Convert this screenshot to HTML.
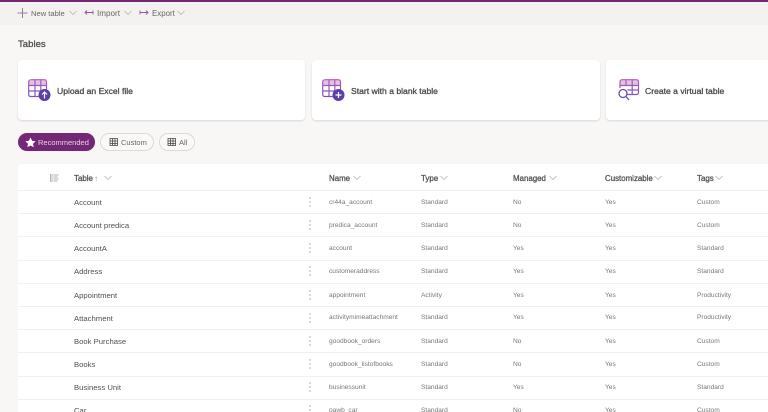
<!DOCTYPE html>
<html><head><meta charset="utf-8"><style>
html,body{margin:0;padding:0}
body{width:768px;height:412px;overflow:hidden;position:relative;background:#f8f7f6;font-family:"Liberation Sans",sans-serif;color:#444}
#w{left:0;top:0;width:768px;height:412px;overflow:hidden;filter:blur(.3px)}
div,span,svg{position:absolute}
.t{white-space:nowrap;line-height:12px;margin-top:1px}
.cmd{font-size:7.9px;color:#666;top:7px}
.card{background:#fff;border-radius:4px;top:60px;height:60px;box-shadow:0 1px 2px rgba(0,0,0,.13)}
.ct{font-size:8.6px;color:#4a4a4a;top:85px;-webkit-text-stroke:.3px #4a4a4a;margin-top:0}
.pill{top:133px;height:18px;border-radius:9px;border:1px solid #dcdad8;box-sizing:border-box;background:#faf9f8}
.h{font-size:7.9px;color:#555;top:172px;-webkit-text-stroke:.32px #555}
.r{height:23.2px;left:18px;width:750px;border-top:1px solid #f1f0ef;box-sizing:border-box}
.a{font-size:7.7px;color:#505050;left:74px}
.b{font-size:6.6px;color:#777;left:329px}
.c{font-size:6.6px;color:#777;left:421px}
.d{font-size:6.6px;color:#777;left:513px}
.e{font-size:6.6px;color:#777;left:605px}
.f{font-size:6.6px;color:#777;left:697px}
.dots{left:309px;width:2px;height:10px}
</style></head><body><div id="w">
<svg width="0" height="0" style="left:0;top:0"><defs><linearGradient id="g" x1="0" y1="0" x2="0" y2="1"><stop offset="0" stop-color="#b45ab4"/><stop offset="1" stop-color="#7a55c0"/></linearGradient></defs></svg>
<div style="left:0;top:0;width:768px;height:25px;background:#f3f2f1"></div>
<div style="left:0;top:0;width:768px;height:1.500px;background:#742774"></div>
<svg style="left:17px;top:7px" width="11" height="12" viewBox="0 0 11 12"><path d="M5.500 1v10M.5 6h10" stroke="#9a7a9a" stroke-width="1" fill="none"/></svg>
<span class="t cmd" style="left:31px;font-size:7.600px">New table</span>
<svg style="left:69px;top:10px" width="8" height="6" viewBox="0 0 8 6"><path d="M.5 1l3.500 3.500L7.500 1" stroke="#aaa" stroke-width=".7" fill="none"/></svg>
<svg style="left:84px;top:9px" width="10" height="7" viewBox="0 0 10 7"><path d="M1 3.500h8M3 1.500l-2 2 2 2M9 1.500v4" stroke="#8f5a8f" stroke-width=".9" fill="none"/></svg>
<span class="t cmd" style="left:97px;font-size:8.100px">Import</span>
<svg style="left:124px;top:10px" width="8" height="6" viewBox="0 0 8 6"><path d="M.5 1l3.500 3.500L7.500 1" stroke="#aaa" stroke-width=".7" fill="none"/></svg>
<svg style="left:139px;top:9px" width="10" height="7" viewBox="0 0 10 7"><path d="M1 3.500h8M7 1.500l2 2-2 2M1 1.500v4" stroke="#8f5a8f" stroke-width=".9" fill="none"/></svg>
<span class="t cmd" style="left:152px">Export</span>
<svg style="left:177px;top:10px" width="8" height="6" viewBox="0 0 8 6"><path d="M.5 1l3.500 3.500L7.500 1" stroke="#aaa" stroke-width=".7" fill="none"/></svg>
<span class="t" style="left:18px;top:38px;font-size:9.600px;color:#505050;-webkit-text-stroke:.3px #505050">Tables</span>

<div class="card" style="left:18px;width:287px"></div>
<div class="card" style="left:312px;width:288px"></div>
<div class="card" style="left:606px;width:170px"></div>

<svg style="left:28px;top:79px" width="24" height="23" viewBox="0 0 24 23"><rect x="1" y="1" width="17.500" height="5.500" fill="#c98fd0" opacity=".55"/><path d="M3 .7h13.500a2 2 0 0 1 2 2v9M.7 2.700a2 2 0 0 1 2-2M.7 2.700v12.800a2 2 0 0 0 2 2h9M.7 6.500h17.800M.7 12h12M7 .7v16.800M12.800 .7v11" fill="none" stroke="url(#g)" stroke-width="1.200"/><circle cx="16.500" cy="16" r="6" fill="#5b3ea6"/><path d="M16.500 19.500v-6M14 15.500l2.500-2.500 2.500 2.500" stroke="#fff" stroke-width="1.200" fill="none"/></svg>
<span class="t ct" style="left:57px">Upload an Excel file</span>

<svg style="left:322px;top:79px" width="24" height="23" viewBox="0 0 24 23"><rect x="1" y="1" width="17.500" height="5.500" fill="#c98fd0" opacity=".55"/><path d="M3 .7h13.500a2 2 0 0 1 2 2v9M.7 2.700a2 2 0 0 1 2-2M.7 2.700v12.800a2 2 0 0 0 2 2h9M.7 6.500h17.800M.7 12h12M7 .7v16.800M12.800 .7v11" fill="none" stroke="url(#g)" stroke-width="1.200"/><circle cx="16.500" cy="16" r="6" fill="#5b3ea6"/><path d="M16.500 13v6M13.500 16h6" stroke="#fff" stroke-width="1.200" fill="none"/></svg>
<span class="t ct" style="left:351px">Start with a blank table</span>

<svg style="left:616px;top:79px" width="24" height="23" viewBox="0 0 24 23"><rect x="4" y="1" width="18.500" height="5.500" fill="#c98fd0" opacity=".55"/><path d="M6 .7h14.500a2 2 0 0 1 2 2v10.800a2 2 0 0 1-2 2H11M4 9V2.700a2 2 0 0 1 2-2M4 6.500h18.500M10 .7v6M16.200 .7v14.800M11.500 11h11" fill="none" stroke="url(#g)" stroke-width="1.200"/><circle cx="7" cy="14.500" r="4" fill="#fff" stroke="#6a4bb5" stroke-width="1.300"/><path d="M10 17.500l3 3.500" stroke="#6a4bb5" stroke-width="1.300"/></svg>
<span class="t ct" style="left:645px">Create a virtual table</span>

<div class="pill" style="left:18px;width:77px;background:#742774;border:0"></div>
<svg style="left:25px;top:136.500px" width="11" height="11" viewBox="0 0 24 24"><path d="M12 1l3.400 7.200 7.800 1-5.700 5.400 1.500 7.800-7-3.800-7 3.800 1.500-7.800L.800 9.200l7.800-1z" fill="#fff"/></svg>
<span class="t" style="left:38px;top:136px;font-size:7.500px;color:#e4d3e4">Recommended</span>
<div class="pill" style="left:100px;width:54px"></div>
<svg style="left:109px;top:137.500px" width="10" height="9" viewBox="0 0 10 9"><path d="M1 .5h7.500v7H1zM1 3h7.500M1 5.500h7.500M3.500.5v7M6 .5v7" fill="none" stroke="#444" stroke-width=".8"/></svg>
<span class="t" style="left:121px;top:136px;font-size:7.500px;color:#666">Custom</span>
<div class="pill" style="left:159px;width:36px"></div>
<svg style="left:167px;top:137.500px" width="10" height="9" viewBox="0 0 10 9"><path d="M1 .5h7.500v7H1zM1 3h7.500M1 5.500h7.500M3.500.5v7M6 .5v7" fill="none" stroke="#444" stroke-width=".8"/></svg>
<span class="t" style="left:179px;top:136px;font-size:7.500px;color:#666">All</span>

<div style="left:18px;top:164px;width:750px;height:248px;background:#fff;border-radius:4px 0 0 0"></div>
<svg style="left:50px;top:174px" width="9" height="8" viewBox="0 0 9 8"><path d="M.5 0v8M2 0v8M3.500 1h5M3.500 3h4M3.500 5h5M3.500 7h4" stroke="#999" stroke-width=".7" fill="none"/></svg>
<span class="t h" style="left:74px">Table</span>
<span class="t" style="left:94px;top:172px;font-size:8px;color:#888">↑</span>
<svg style="left:104px;top:175px" width="8" height="6" viewBox="0 0 8 6"><path d="M.5 1l3.500 3.500L7.500 1" stroke="#aaa" stroke-width=".7" fill="none"/></svg>
<span class="t h" style="left:329px">Name</span>
<svg style="left:353px;top:175px" width="8" height="6" viewBox="0 0 8 6"><path d="M.5 1l3.500 3.500L7.500 1" stroke="#aaa" stroke-width=".7" fill="none"/></svg>
<span class="t h" style="left:421px">Type</span>
<svg style="left:440px;top:175px" width="8" height="6" viewBox="0 0 8 6"><path d="M.5 1l3.500 3.500L7.500 1" stroke="#aaa" stroke-width=".7" fill="none"/></svg>
<span class="t h" style="left:513px">Managed</span>
<svg style="left:549px;top:175px" width="8" height="6" viewBox="0 0 8 6"><path d="M.5 1l3.500 3.500L7.500 1" stroke="#aaa" stroke-width=".7" fill="none"/></svg>
<span class="t h" style="left:605px">Customizable</span>
<svg style="left:654px;top:175px" width="8" height="6" viewBox="0 0 8 6"><path d="M.5 1l3.500 3.500L7.500 1" stroke="#aaa" stroke-width=".7" fill="none"/></svg>
<span class="t h" style="left:697px">Tags</span>
<svg style="left:715px;top:175px" width="8" height="6" viewBox="0 0 8 6"><path d="M.5 1l3.500 3.500L7.500 1" stroke="#aaa" stroke-width=".7" fill="none"/></svg>

<div class="r" style="top:190px"></div><div class="r" style="top:213.200px"></div><div class="r" style="top:236.400px"></div><div class="r" style="top:259.600px"></div><div class="r" style="top:282.800px"></div><div class="r" style="top:306px"></div><div class="r" style="top:329.200px"></div><div class="r" style="top:352.400px"></div><div class="r" style="top:375.600px"></div><div class="r" style="top:398.800px"></div>

<span class="t a" style="top:196px">Account</span><span class="t b" style="top:196px">cr44a_account</span><span class="t c" style="top:196px">Standard</span><span class="t d" style="top:196px">No</span><span class="t e" style="top:196px">Yes</span><span class="t f" style="top:196px">Custom</span>
<span class="t a" style="top:219px">Account predica</span><span class="t b" style="top:219px">predica_account</span><span class="t c" style="top:219px">Standard</span><span class="t d" style="top:219px">No</span><span class="t e" style="top:219px">Yes</span><span class="t f" style="top:219px">Custom</span>
<span class="t a" style="top:242px">AccountA</span><span class="t b" style="top:242px">account</span><span class="t c" style="top:242px">Standard</span><span class="t d" style="top:242px">Yes</span><span class="t e" style="top:242px">Yes</span><span class="t f" style="top:242px">Standard</span>
<span class="t a" style="top:265px">Address</span><span class="t b" style="top:265px">customeraddress</span><span class="t c" style="top:265px">Standard</span><span class="t d" style="top:265px">Yes</span><span class="t e" style="top:265px">Yes</span><span class="t f" style="top:265px">Standard</span>
<span class="t a" style="top:289px">Appointment</span><span class="t b" style="top:289px">appointment</span><span class="t c" style="top:289px">Activity</span><span class="t d" style="top:289px">Yes</span><span class="t e" style="top:289px">Yes</span><span class="t f" style="top:289px">Productivity</span>
<span class="t a" style="top:312px">Attachment</span><span class="t b" style="top:311px">activitymimeattachment</span><span class="t c" style="top:311px">Standard</span><span class="t d" style="top:311px">Yes</span><span class="t e" style="top:311px">Yes</span><span class="t f" style="top:311px">Productivity</span>
<span class="t a" style="top:335px">Book Purchase</span><span class="t b" style="top:335px">goodbook_orders</span><span class="t c" style="top:335px">Standard</span><span class="t d" style="top:335px">No</span><span class="t e" style="top:335px">Yes</span><span class="t f" style="top:335px">Custom</span>
<span class="t a" style="top:358px">Books</span><span class="t b" style="top:358px">goodbook_listofbooks</span><span class="t c" style="top:358px">Standard</span><span class="t d" style="top:358px">No</span><span class="t e" style="top:358px">Yes</span><span class="t f" style="top:358px">Custom</span>
<span class="t a" style="top:381px">Business Unit</span><span class="t b" style="top:381px">businessunit</span><span class="t c" style="top:381px">Standard</span><span class="t d" style="top:381px">Yes</span><span class="t e" style="top:381px">Yes</span><span class="t f" style="top:381px">Standard</span>
<span class="t a" style="top:404px">Car</span><span class="t b" style="top:404px">pawb_car</span><span class="t c" style="top:404px">Standard</span><span class="t d" style="top:404px">No</span><span class="t e" style="top:404px">Yes</span><span class="t f" style="top:404px">Custom</span>

<svg class="dots" style="top:197px" viewBox="0 0 2 10"><path d="M1 .5v1M1 4.500v1M1 8.500v1" stroke="#9a50b0" stroke-width="1.100"/></svg>
<svg class="dots" style="top:220px" viewBox="0 0 2 10"><path d="M1 .5v1M1 4.500v1M1 8.500v1" stroke="#9a50b0" stroke-width="1.100"/></svg>
<svg class="dots" style="top:243px" viewBox="0 0 2 10"><path d="M1 .5v1M1 4.500v1M1 8.500v1" stroke="#9a50b0" stroke-width="1.100"/></svg>
<svg class="dots" style="top:266px" viewBox="0 0 2 10"><path d="M1 .5v1M1 4.500v1M1 8.500v1" stroke="#9a50b0" stroke-width="1.100"/></svg>
<svg class="dots" style="top:290px" viewBox="0 0 2 10"><path d="M1 .5v1M1 4.500v1M1 8.500v1" stroke="#9a50b0" stroke-width="1.100"/></svg>
<svg class="dots" style="top:313px" viewBox="0 0 2 10"><path d="M1 .5v1M1 4.500v1M1 8.500v1" stroke="#9a50b0" stroke-width="1.100"/></svg>
<svg class="dots" style="top:336px" viewBox="0 0 2 10"><path d="M1 .5v1M1 4.500v1M1 8.500v1" stroke="#9a50b0" stroke-width="1.100"/></svg>
<svg class="dots" style="top:359px" viewBox="0 0 2 10"><path d="M1 .5v1M1 4.500v1M1 8.500v1" stroke="#9a50b0" stroke-width="1.100"/></svg>
<svg class="dots" style="top:382px" viewBox="0 0 2 10"><path d="M1 .5v1M1 4.500v1M1 8.500v1" stroke="#9a50b0" stroke-width="1.100"/></svg>
<svg class="dots" style="top:405px" viewBox="0 0 2 10"><path d="M1 .5v1M1 4.500v1M1 8.500v1" stroke="#9a50b0" stroke-width="1.100"/></svg>
</div></body></html>
